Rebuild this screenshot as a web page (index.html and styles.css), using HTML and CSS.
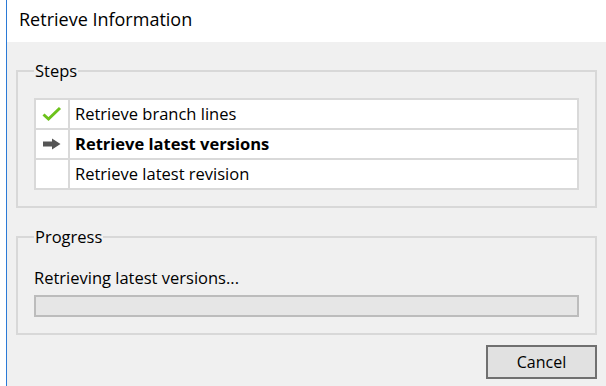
FILE: index.html
```html
<!DOCTYPE html>
<html lang="en">
<head>
  <meta charset="UTF-8" />
  <title>Retrieve Information</title>
  <link rel="stylesheet" href="styles.css">
</head>
<body>
  <div class="window">
    <div class="header">
      <h1>Retrieve Information</h1>
    </div>

    <div class="content">
      <fieldset class="group">
        <legend>Steps</legend>
        <table class="steps">
          <tr>
            <td class="icon">
              <svg width="20" height="16" viewBox="0 0 20 16">
                <path d="M1.5 8.5 L6.5 13 L18 2" fill="none" stroke="#6cc21b" stroke-width="3"/>
              </svg>
            </td>
            <td>Retrieve branch lines</td>
          </tr>
          <tr class="current">
            <td class="icon">
              <svg width="20" height="12" viewBox="0 0 20 12">
                <path d="M1 3.5 H10 V0.5 L18.5 6 L10 11.5 V8.5 H1 Z" fill="#555"/>
              </svg>
            </td>
            <td>Retrieve latest versions</td>
          </tr>
          <tr>
            <td class="icon"></td>
            <td>Retrieve latest revision</td>
          </tr>
        </table>
      </fieldset>

      <fieldset class="group">
        <legend>Progress</legend>
        <p class="status">Retrieving latest versions...</p>
        <div class="progress"></div>
      </fieldset>

      <div class="actions">
        <button type="button">Cancel</button>
      </div>
    </div>
  </div>
</body>
</html>
```

FILE: styles.css
```css
body {
  margin: 0;
  padding: 0;
  font-family: "Open Sans", "Noto Sans", sans-serif;
  color: #000;
  background: #fff;
}

.window {
  margin-left: 6px;
  border-left: 1px solid #2b7ad6;
  height: 386px;
  box-sizing: border-box;
  display: flex;
  flex-direction: column;
}

.header {
  background: #fff;
  height: 42px;
  padding-left: 12px;
  box-sizing: border-box;
}

.header h1 {
  margin: 0;
  font-size: 18px;
  font-weight: normal;
  line-height: 38px;
}

.content {
  flex: 1;
  background: #f0f0f0;
  padding: 19px 9px 0 9px;
  display: flex;
  flex-direction: column;
}

.group {
  margin: 0;
  border: 2px solid #d8d8d8;
  padding: 17px 16px 16px 16px;
  font-size: 16.5px;
}

.group + .group {
  margin-top: 19px;
  padding-bottom: 16px;
}

.group legend {
  margin-left: 0;
  padding: 0 1px;
  line-height: 20px;
}

.steps {
  width: 100%;
  border-collapse: collapse;
  background: #fff;
  border: 2px solid #d9d9d9;
  font-size: 16.5px;
}

.steps td {
  border: 2px solid #d9d9d9;
  height: 28px;
  padding: 0 0 0 5px;
  line-height: 26px;
}

.steps td.icon {
  width: 32px;
  padding: 0;
  text-align: center;
}

.steps td.icon svg {
  display: block;
  margin: 0 auto;
}

.steps tr.current td {
  font-weight: bold;
}

.status {
  margin: 2px 0 0 0;
  line-height: 24px;
}

.progress {
  margin-top: 5px;
  height: 18px;
  background: #e6e6e6;
  border: 2px solid #bcbcbc;
}

.actions {
  display: flex;
  justify-content: flex-end;
  padding-top: 10px;
}

.actions button {
  width: 111px;
  height: 34px;
  background: #e1e1e1;
  border: 2px solid #707070;
  font-family: "Open Sans", "Noto Sans", sans-serif;
  font-size: 16px;
  color: #000;
}
```
